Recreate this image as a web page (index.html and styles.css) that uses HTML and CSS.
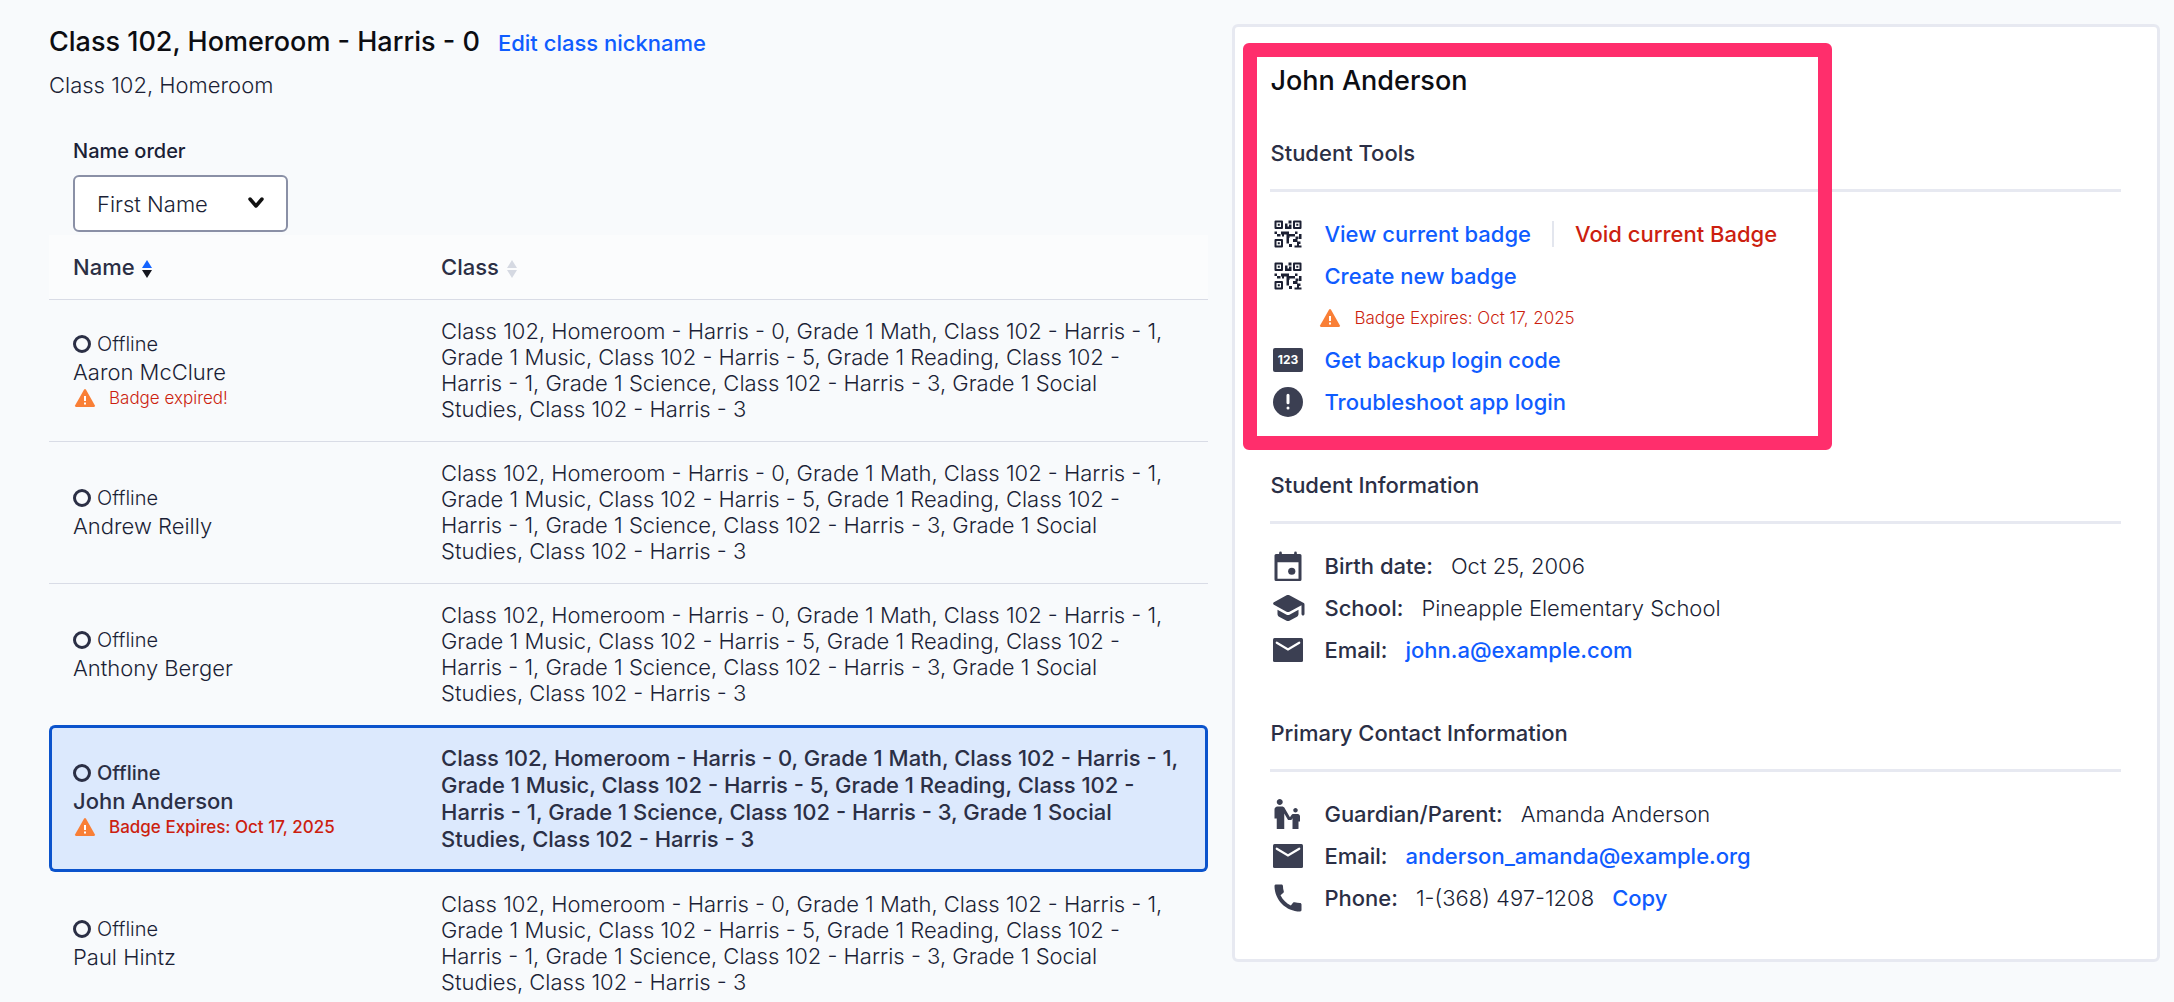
FILE: index.html
```html
<!DOCTYPE html>
<html lang="en">
<head>
    <meta charset="UTF-8">
    <meta name="viewport" content="width=device-width, initial-scale=1.0">
    <title>Class 102, Homeroom - Harris - 0</title>
    <link rel="stylesheet" href="styles.css">
</head>
<body>
    <!-- shared icons -->
    <svg class="sprite" aria-hidden="true">
        <symbol id="icon-warning" viewBox="0 0 24 24">
            <path fill="#f97f36" d="M11.1 3.6Q12 2.400 12.900 3.600L21.800 19.200Q22.300 20.800 21 21H3Q1.700 20.800 2.200 19.200Z"/>
            <path fill="#fff" d="M11 10h2v5h-2zM11 16.500h2v2h-2z"/>
        </symbol>
        <symbol id="icon-qr" viewBox="0 0 36 36">
            <g transform="translate(4.500 4.500)">
                <path fill="none" stroke="#1c2033" stroke-width="2" stroke-linejoin="round" d="M1 1h6.500v6.500h-6.500zM19.500 1h6.500v6.500h-6.500zM1 19.500h6.500v6.500h-6.500z"/>
                <path fill="#1c2033" d="M3.300 3.300h2v2h-2zM21.800 3.300h2v2h-2zM3.300 21.800h2v2h-2zM14 0h3v3h-3zM10.500 3h2.500v3h1.500v-2h2.500v4.500h-6.500zM0 11h2.500v2.500h-2.500zM2.500 13.500h3.500v2.500h-3.500zM6.500 11h8v2.500h6v2.500h-5.500v1.500h-3v-3.500h-2.500v2h-2v-2h-1zM20.500 11h2.500v2.500h-2.500zM24.500 13.500h2.500v5h-2.500zM21 16h3v2.500h-3zM12 17.500h2.500v5.500h-2.500zM14.500 23.500h3v3h-3zM18.500 18.500h4.500v2.500h3v2.500h-3.500v-2h-4zM22.500 22.500h2v2.500h2.500v2h-7v-2h2.500z"/>
            </g>
        </symbol>
        <symbol id="icon-mail" viewBox="0 0 24 24">
            <rect x="2" y="4" width="20" height="16" rx="1" fill="#3b3f52"/>
            <path fill="none" stroke="#fff" stroke-width="1.500" stroke-linecap="round" d="M4.500 7.200L12 11.600L19.500 7.200"/>
        </symbol>
    </svg>

    <div class="page">
        <main class="roster">
            <div class="title-row">
                <h1>Class 102, Homeroom - Harris - 0</h1>
                <a href="#">Edit class nickname</a>
            </div>
            <p class="subtitle">Class 102, Homeroom</p>

            <div class="order">
                <label for="nameOrder">Name order</label>
                <div class="select-box">
                    <select id="nameOrder">
                        <option>First Name</option>
                        <option>Last Name</option>
                    </select>
                    <svg class="chevron" viewBox="0 0 16 12" aria-hidden="true"><path d="M2 2l6 7 6-7" fill="none" stroke="#111" stroke-width="3.500" stroke-linecap="round" stroke-linejoin="round"/></svg>
                </div>
            </div>

            <table>
                <thead>
                    <tr>
                        <th class="name-col">
                            Name
                            <svg class="sort" viewBox="0 0 10 18" aria-hidden="true"><path fill="#1464ff" d="M5 0l5 8H0z"/><path fill="#14161f" d="M5 18l5-8H0z"/></svg>
                        </th>
                        <th>
                            Class
                            <svg class="sort" viewBox="0 0 10 18" aria-hidden="true"><path fill="#d5d9e2" d="M5 0l5 8H0zM5 18l5-8H0z"/></svg>
                        </th>
                    </tr>
                </thead>
                <tbody>
                    <tr>
                        <td>
                            <div class="status">Offline</div>
                            <div class="student">Aaron McClure</div>
                            <div class="badge-note"><svg><use href="#icon-warning"/></svg>Badge expired!</div>
                        </td>
                        <td>Class 102, Homeroom - Harris - 0, Grade 1 Math, Class 102 - Harris - 1, Grade 1 Music, Class 102 - Harris - 5, Grade 1 Reading, Class 102 - Harris - 1, Grade 1 Science, Class 102 - Harris - 3, Grade 1 Social Studies, Class 102 - Harris - 3</td>
                    </tr>
                    <tr>
                        <td>
                            <div class="status">Offline</div>
                            <div class="student">Andrew Reilly</div>
                        </td>
                        <td>Class 102, Homeroom - Harris - 0, Grade 1 Math, Class 102 - Harris - 1, Grade 1 Music, Class 102 - Harris - 5, Grade 1 Reading, Class 102 - Harris - 1, Grade 1 Science, Class 102 - Harris - 3, Grade 1 Social Studies, Class 102 - Harris - 3</td>
                    </tr>
                    <tr>
                        <td>
                            <div class="status">Offline</div>
                            <div class="student">Anthony Berger</div>
                        </td>
                        <td>Class 102, Homeroom - Harris - 0, Grade 1 Math, Class 102 - Harris - 1, Grade 1 Music, Class 102 - Harris - 5, Grade 1 Reading, Class 102 - Harris - 1, Grade 1 Science, Class 102 - Harris - 3, Grade 1 Social Studies, Class 102 - Harris - 3</td>
                    </tr>
                    <tr class="selected">
                        <td>
                            <div class="status">Offline</div>
                            <div class="student">John Anderson</div>
                            <div class="badge-note"><svg><use href="#icon-warning"/></svg>Badge Expires: Oct 17, 2025</div>
                        </td>
                        <td>Class 102, Homeroom - Harris - 0, Grade 1 Math, Class 102 - Harris - 1, Grade 1 Music, Class 102 - Harris - 5, Grade 1 Reading, Class 102 - Harris - 1, Grade 1 Science, Class 102 - Harris - 3, Grade 1 Social Studies, Class 102 - Harris - 3</td>
                    </tr>
                    <tr>
                        <td>
                            <div class="status">Offline</div>
                            <div class="student">Paul Hintz</div>
                        </td>
                        <td>Class 102, Homeroom - Harris - 0, Grade 1 Math, Class 102 - Harris - 1, Grade 1 Music, Class 102 - Harris - 5, Grade 1 Reading, Class 102 - Harris - 1, Grade 1 Science, Class 102 - Harris - 3, Grade 1 Social Studies, Class 102 - Harris - 3</td>
                    </tr>
                </tbody>
            </table>
        </main>

        <aside class="panel">
            <div class="highlight"></div>
            <h2>John Anderson</h2>

            <section>
                <h3>Student Tools</h3>
                <ul>
                    <li>
                        <svg class="icon"><use href="#icon-qr"/></svg>
                        <a href="#">View current badge</a>
                        <span class="divider"></span>
                        <a href="#" class="danger">Void current Badge</a>
                    </li>
                    <li>
                        <svg class="icon"><use href="#icon-qr"/></svg>
                        <a href="#">Create new badge</a>
                    </li>
                    <li class="note-row">
                        <div class="badge-note"><svg><use href="#icon-warning"/></svg>Badge Expires: Oct 17, 2025</div>
                    </li>
                    <li>
                        <svg class="icon" viewBox="0 0 36 36">
                            <rect x="3" y="6" width="30" height="24" rx="2" fill="#3b3f52"/>
                            <text class="digits" x="18" y="22" text-anchor="middle">123</text>
                        </svg>
                        <a href="#">Get backup login code</a>
                    </li>
                    <li>
                        <svg class="icon" viewBox="0 0 24 24">
                            <circle cx="12" cy="12" r="10" fill="#3b3f52"/>
                            <path stroke="#fff" stroke-width="2" stroke-linecap="round" d="M12 7.500v5M12 16v.01"/>
                        </svg>
                        <a href="#">Troubleshoot app login</a>
                    </li>
                </ul>
            </section>

            <section>
                <h3>Student Information</h3>
                <ul>
                    <li>
                        <svg class="icon" viewBox="0 0 24 24">
                            <path fill="#3b3f52" fill-rule="evenodd" d="M4 4h16q1 0 1 1v16q0 1-1 1H4q-1 0-1-1V5q0-1 1-1zM5 9.500v11h14v-11z"/>
                            <path stroke="#3b3f52" stroke-width="1.800" stroke-linecap="round" d="M7 3.300v2M17 3.300v2"/>
                            <circle cx="14.500" cy="15.500" r="2.400" fill="#3b3f52"/>
                        </svg>
                        <strong>Birth date:</strong>
                        <span>Oct 25, 2006</span>
                    </li>
                    <li>
                        <svg class="icon" viewBox="0 0 24 24">
                            <path fill="#3b3f52" d="M5 13.180v2.810c0 .73.4 1.410 1.040 1.760l5 2.730c.6.33 1.320.33 1.920 0l5-2.730c.64-.35 1.040-1.030 1.040-1.760v-2.810l-6.040 3.300c-.6.33-1.320.33-1.920 0L5 13.180zm6.040-9.660l-8.430 4.600c-.69.38-.69 1.380 0 1.760l8.430 4.600c.6.33 1.320.33 1.920 0L21 10.090V16c0 .55.45 1 1 1s1-.45 1-1V9.590c0-.37-.2-.7-.52-.88l-9.520-5.190c-.6-.32-1.320-.32-1.920 0z"/>
                        </svg>
                        <strong>School:</strong>
                        <span>Pineapple Elementary School</span>
                    </li>
                    <li>
                        <svg class="icon"><use href="#icon-mail"/></svg>
                        <strong>Email:</strong>
                        <a href="mailto:john.a@example.com">john.a@example.com</a>
                    </li>
                </ul>
            </section>

            <section>
                <h3>Primary Contact Information</h3>
                <ul>
                    <li>
                        <svg class="icon" viewBox="0 0 24 24">
                            <path fill="#3b3f52" d="M6.500 2c1.100 0 2 .9 2 2s-.9 2-2 2-2-.9-2-2 .9-2 2-2zM15.500 9.500c0 .83.67 1.500 1.500 1.500s1.500-.67 1.500-1.500S17.830 8 17 8s-1.500.67-1.500 1.500zM18.500 12h-2.840c-.58.01-1.140.32-1.450.86l-.92 1.320L9.720 8C9.350 7.370 8.690 7.010 8.010 7H5c-1.100 0-2 .9-2 2v6h1.500v7h5V11.610L12.030 16h2.200l.77-1.100V22h4v-5h1v-3.500c0-.82-.67-1.500-1.500-1.500z"/>
                        </svg>
                        <strong>Guardian/Parent:</strong>
                        <span>Amanda Anderson</span>
                    </li>
                    <li>
                        <svg class="icon"><use href="#icon-mail"/></svg>
                        <strong>Email:</strong>
                        <a href="mailto:anderson_amanda@example.org">anderson_amanda@example.org</a>
                    </li>
                    <li>
                        <svg class="icon" viewBox="0 0 24 24">
                            <path fill="#3b3f52" d="M20.010 15.380c-1.230 0-2.420-.2-3.530-.56-.35-.12-.74-.03-1.010.24l-1.570 1.970c-2.830-1.350-5.480-3.900-6.890-6.830l1.950-1.660c.27-.28.35-.67.24-1.020-.37-1.110-.56-2.300-.56-3.530 0-.54-.45-.99-.99-.99H4.190C3.650 3 3 3.240 3 3.990 3 13.280 10.730 21 20.010 21c.71 0 .99-.63.99-1.180v-3.450c0-.54-.45-.99-.99-.99z"/>
                        </svg>
                        <strong>Phone:</strong>
                        <span>1-(368) 497-1208</span>
                        <button type="button">Copy</button>
                    </li>
                </ul>
            </section>
        </aside>
    </div>
</body>
</html>
```
FILE: styles.css
```css
*, *::before {
    box-sizing: border-box;
}
body {
    margin: 0;
    height: 100vh;
    overflow: hidden;
    background-color: #f8fafc;
    color: #1b1f36;
    font-family: Inter, "Liberation Sans", sans-serif;
    font-size: 22px;
    font-weight: 300;
}
.sprite {
    display: none;
}
.page {
    display: grid;
    grid-template-columns: 5fr 4fr;
    gap: 24px;
    align-items: start;
    padding: 24px 14px 0 49px;
}
h1, h2, h3, p, ul {
    margin: 0;
    padding: 0;
}
h1, h2 {
    color: #0c0d12;
    font-size: 27px;
    font-weight: 500;
}
a, button {
    color: #0f5cff;
    font-weight: 500;
    text-decoration: none;
}
button {
    padding: 0;
    border: none;
    background: none;
    font-family: inherit;
    font-size: 22px;
    cursor: pointer;
}

/* class roster */
.title-row {
    display: flex;
    align-items: baseline;
    gap: 18px;
    line-height: 36px;
}
.subtitle {
    margin-top: 10px;
    line-height: 28px;
}
.order {
    margin-top: 40px;
    padding-left: 24px;
}
.order label {
    display: block;
    margin-bottom: 12px;
    font-size: 20px;
    font-weight: 500;
    line-height: 24px;
}
.select-box {
    position: relative;
    width: 215px;
}
select {
    display: block;
    width: 100%;
    height: 57px;
    padding: 0 56px 0 22px;
    appearance: none;
    border: 2px solid #8a90a6;
    border-radius: 6px;
    background-color: #fff;
    color: inherit;
    font: inherit;
}
.chevron {
    position: absolute;
    top: 22px;
    right: 24px;
    width: 16px;
    height: 12px;
    pointer-events: none;
}
table {
    width: 100%;
    margin-top: 3px;
    border-spacing: 0;
    table-layout: fixed;
}
th {
    height: 64px;
    padding: 0 24px;
    background-color: #fbfcfd;
    color: #2b2f45;
    font-weight: 500;
    text-align: left;
}
.name-col {
    width: 368px;
}
.sort {
    width: 10px;
    height: 18px;
    margin-left: 2px;
    vertical-align: -3px;
}
td {
    padding: 18px 24px 19px;
    border-top: 1px solid #d9dce6;
    line-height: 26px;
}
.status {
    display: flex;
    align-items: center;
    gap: 6px;
    font-size: 20px;
    line-height: 28px;
}
.status::before {
    content: "";
    width: 18px;
    height: 18px;
    border: 3px solid #2b2f45;
    border-radius: 50%;
}
.student {
    line-height: 28px;
}
.badge-note {
    display: flex;
    align-items: center;
    gap: 12px;
    color: #cc1f10;
    font-size: 17px;
    line-height: 22px;
}
.badge-note svg {
    width: 24px;
    height: 24px;
}
.selected td {
    padding: 17px 24px 16px;
    border: 3px solid #0b53cc;
    background-color: #dce9fd;
    color: #2b2f45;
    font-weight: 500;
    line-height: 27px;
}
.selected td:first-child {
    border-right: none;
    border-radius: 6px 0 0 6px;
    padding-left: 21px;
}
.selected td:last-child {
    border-left: none;
    border-radius: 0 6px 6px 0;
    padding-right: 21px;
}
.selected + tr td {
    border-top-color: transparent;
}

/* student panel */
.panel {
    position: relative;
    padding: 38px 36px 40px 35px;
    border: 3px solid #e7e9f1;
    border-radius: 6px;
    background-color: #fff;
}
.highlight {
    position: absolute;
    top: 16px;
    left: 8px;
    width: 589px;
    height: 407px;
    border: 14px solid #ff2e6c;
    border-radius: 6px;
    pointer-events: none;
}
.panel h2 {
    margin-bottom: 40px;
    line-height: 32px;
}
.panel h3 {
    margin-bottom: 21px;
    padding-bottom: 20px;
    border-bottom: 3px solid #e7e9f1;
    color: #2b2f45;
    font-size: 22px;
    font-weight: 500;
    line-height: 32px;
}
section + section {
    margin-top: 46px;
}
.panel li {
    display: flex;
    align-items: center;
    gap: 18px;
    height: 42px;
}
.icon {
    width: 36px;
    height: 36px;
}
.digits {
    fill: #fff;
    font-size: 12px;
    font-weight: 700;
}
strong {
    color: #2b2f45;
    font-weight: 500;
}
.divider {
    width: 2px;
    height: 26px;
    margin: 0 3px;
    background-color: #e3e6ee;
}
.panel .danger {
    color: #cc1f10;
}
.note-row {
    padding-left: 48px;
}
```
